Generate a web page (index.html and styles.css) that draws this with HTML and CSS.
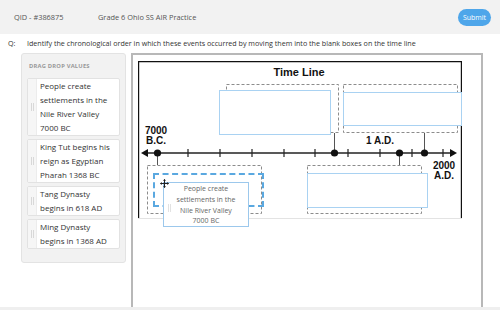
FILE: index.html
```html
<!DOCTYPE html>
<html lang="en">
<head>
    <meta charset="UTF-8">
    <title>Grade 6 Ohio SS AIR Practice</title>
    <link rel="stylesheet" href="styles.css">
</head>
<body>
    <header class="topbar">
        <span class="qid">QID - #386875</span>
        <span class="test-name">Grade 6 Ohio SS AIR Practice</span>
        <button class="submit-button">Submit</button>
    </header>

    <div class="question">
        <span class="q-label">Q:</span>
        <span class="q-text">Identify the chronological order in which these events occurred by moving them into the blank boxes on the time line</span>
    </div>

    <div class="content">
        <!-- Valores para arrastrar -->
        <div class="panel">
            <div class="panel-title">DRAG DROP VALUES</div>
            <div class="card"><span class="grip"></span><span class="card-text">People create settlements in the Nile River Valley 7000 BC</span></div>
            <div class="card"><span class="grip"></span><span class="card-text">King Tut begins his reign as Egyptian Pharah 1368 BC</span></div>
            <div class="card"><span class="grip"></span><span class="card-text">Tang Dynasty begins in 618 AD</span></div>
            <div class="card"><span class="grip"></span><span class="card-text">Ming Dynasty begins in 1368 AD</span></div>
        </div>

        <!-- Linea de tiempo -->
        <div class="workspace">
            <div class="canvas">
                <svg class="timeline" width="324" height="158" viewBox="0 0 324 158">
                    <path d="M0.6 158V0.6H323.4V158" fill="none" stroke="#111" stroke-width="1.2"/>
                    <line x1="0" y1="157.5" x2="324" y2="157.5" stroke="#e3e3e3"/>
                    <text x="161" y="14.5" text-anchor="middle" class="tl-title">Time Line</text>

                    <g fill="none" stroke="#8c8c8c" stroke-width="1" stroke-dasharray="3 2">
                        <rect x="88.5" y="23.5" width="112" height="48"/>
                        <rect x="205.5" y="23.5" width="114" height="48"/>
                        <rect x="9.5" y="104.5" width="114" height="48"/>
                        <rect x="169.5" y="104.5" width="114" height="48"/>
                    </g>

                    <g stroke="#555" stroke-width="1">
                        <line x1="19.5" y1="92" x2="19.5" y2="104"/>
                        <line x1="196.5" y1="72" x2="196.5" y2="92"/>
                        <line x1="286.5" y1="72" x2="286.5" y2="92"/>
                        <line x1="261.5" y1="92" x2="261.5" y2="104"/>
                    </g>

                    <line x1="8" y1="92" x2="314" y2="92" stroke="#222" stroke-width="1.5"/>
                    <polygon points="3,92 10,88 10,96" fill="#111"/>
                    <polygon points="319,92 312,88 312,96" fill="#111"/>

                    <g stroke="#222" stroke-width="1.2">
                        <line x1="50" y1="88" x2="50" y2="96"/>
                        <line x1="82" y1="88" x2="82" y2="96"/>
                        <line x1="114" y1="88" x2="114" y2="96"/>
                        <line x1="146" y1="88" x2="146" y2="96"/>
                        <line x1="177" y1="88" x2="177" y2="96"/>
                        <line x1="210" y1="88" x2="210" y2="96"/>
                        <line x1="242" y1="88" x2="242" y2="96"/>
                        <line x1="274" y1="88" x2="274" y2="96"/>
                        <line x1="305" y1="88" x2="305" y2="96"/>
                    </g>

                    <g fill="#111">
                        <circle cx="19.5" cy="92" r="3.6"/>
                        <circle cx="196.5" cy="92" r="3.6"/>
                        <circle cx="261.5" cy="92" r="3.6"/>
                        <circle cx="286.5" cy="92" r="3.6"/>
                    </g>

                    <g class="tl-label" text-anchor="middle">
                        <text x="18" y="73">7000</text>
                        <text x="18" y="83">B.C.</text>
                        <text x="242" y="83">1 A.D.</text>
                        <text x="306" y="108">2000</text>
                        <text x="306" y="118">A.D.</text>
                    </g>
                </svg>

                <div class="drop drop-a"></div>
                <div class="drop drop-b"></div>
                <div class="drop drop-c"></div>
                <div class="drop drop-d"></div>

                <div class="dragging">
                    <svg class="move-icon" width="9" height="9" viewBox="0 0 9 9">
                        <path d="M4.5 0.5V8.5M0.5 4.5H8.5" stroke="#222" stroke-width="1"/>
                        <path d="M4.5 0L3 1.8H6ZM4.5 9L3 7.2H6ZM0 4.5L1.8 3V6ZM9 4.5L7.2 3V6Z" fill="#222"/>
                    </svg>
                    <span class="drag-grip"></span>
                    People create<br>settlements in the<br>Nile River Valley<br>7000 BC
                </div>
            </div>
        </div>
    </div>

    <div class="footer"></div>
</body>
</html>
```

FILE: styles.css
```css
body {
    margin: 0;
    width: 500px;
    height: 310px;
    overflow: hidden;
    font-family: 'Open Sans', sans-serif;
    color: #333333;
    background-color: #ffffff;
}

.topbar {
    display: flex;
    align-items: center;
    height: 34px;
    padding: 0 9px 0 14px;
    background-color: #f2f2f2;
    font-size: 7.4px;
    color: #555555;
}

.qid {
    width: 84px;
}

.submit-button {
    margin-left: auto;
    width: 33px;
    height: 17px;
    padding: 0;
    border: none;
    border-radius: 9px;
    background-color: #4ea6ea;
    color: #ffffff;
    font-family: 'Open Sans', sans-serif;
    font-size: 7px;
}

.question {
    display: flex;
    height: 19px;
    box-sizing: border-box;
    padding: 5px 0 0 8px;
    font-size: 7.15px;
    line-height: 9px;
    color: #333333;
}

.q-label {
    width: 19px;
}

.content {
    display: flex;
    align-items: flex-start;
    height: 254px;
}

.panel {
    width: 105px;
    height: 210px;
    margin-left: 21px;
    box-sizing: border-box;
    padding: 0 5px 0 5px;
    background-color: #f2f2f2;
    border: 1px solid #e3e3e3;
    border-radius: 3px;
}

.panel-title {
    margin: 8px 0 8px 2px;
    font-size: 5.8px;
    line-height: 8px;
    font-weight: bold;
    color: #999999;
    letter-spacing: 0.2px;
}

.card {
    display: flex;
    margin-bottom: 3px;
    background-color: #ffffff;
    border: 1px solid #e2e2e2;
    border-radius: 2px;
}

.grip {
    position: relative;
    width: 8px;
    flex-shrink: 0;
    background-color: #f6f6f6;
    border-right: 1px solid #ececec;
}

.grip::after {
    content: "";
    position: absolute;
    left: 3px;
    top: 50%;
    width: 1px;
    height: 8px;
    margin-top: -4px;
    border-left: 1px solid #d8d8d8;
    border-right: 1px solid #d8d8d8;
}

.card-text {
    padding: 0 4px 0 3px;
    font-size: 8px;
    line-height: 14px;
    color: #333333;
}

.workspace {
    width: 352px;
    height: 254px;
    margin-left: 5px;
    box-sizing: border-box;
    padding: 6px 0 0 5px;
    border: 2px solid #b8b8b8;
    border-bottom: none;
}

.canvas {
    position: relative;
    width: 324px;
    height: 158px;
}

.timeline {
    display: block;
}

.tl-title {
    font-family: 'Liberation Sans', Arial, sans-serif;
    font-size: 11px;
    font-weight: bold;
    fill: #111111;
}

.tl-label {
    font-family: 'Liberation Sans', Arial, sans-serif;
    font-size: 10px;
    font-weight: bold;
    fill: #111111;
}

.drop {
    position: absolute;
    box-sizing: border-box;
    border: 1px solid #a9d2f2;
    background-color: #ffffff;
}

.drop-a {
    left: 81px;
    top: 29px;
    width: 112px;
    height: 45px;
}

.drop-b {
    left: 205px;
    top: 31px;
    width: 119px;
    height: 34px;
}

.drop-c {
    left: 169px;
    top: 112px;
    width: 121px;
    height: 35px;
}

.drop-d {
    left: 15px;
    top: 112px;
    width: 111px;
    height: 34px;
    border: 2px dashed #5aa8e0;
    background-color: transparent;
}

.dragging {
    position: absolute;
    left: 25px;
    top: 121px;
    width: 86px;
    height: 45px;
    box-sizing: border-box;
    padding-top: 1px;
    border: 1px solid #9cc8ec;
    background-color: #ffffff;
    font-size: 7px;
    line-height: 10.8px;
    color: #666666;
    text-align: center;
}

.move-icon {
    position: absolute;
    left: -4px;
    top: -4px;
}

.drag-grip {
    position: absolute;
    left: 4px;
    top: 21px;
    width: 1px;
    height: 8px;
    border-left: 1px solid #e2e2e2;
    border-right: 1px solid #e2e2e2;
}

.footer {
    height: 3px;
    background-color: #efefef;
}
```
